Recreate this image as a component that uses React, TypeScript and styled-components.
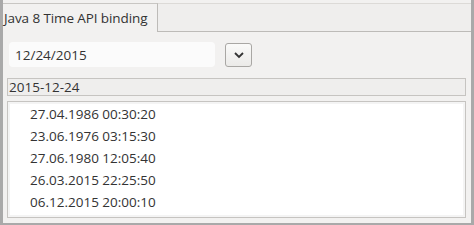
import React from "react";
import styled, { createGlobalStyle } from "styled-components";

const Global = createGlobalStyle`
  html, body {
    margin: 0;
    padding: 0;
    background: #f2f1f0;
  }
  body {
    font-family: "Open Sans", "DejaVu Sans", sans-serif;
    font-size: 13.5px;
    color: #333;
  }
`;

const Window = styled.div`
  width: 474px;
  height: 225px;
  box-sizing: border-box;
  display: flex;
  flex-direction: column;
  background: #f2f1f0;
  border-left: 3px solid #a9a9a9;
  border-right: 3px solid #a9a9a9;
  border-bottom: 2px solid #a9a9a9;
`;

const TabBar = styled.div`
  display: flex;
  height: 32px;
  flex-shrink: 0;
`;

const Tab = styled.div`
  width: 155px;
  box-sizing: border-box;
  padding: 5px 0 0 1px;
  border-top: 1px solid #c8c6c3;
  border-right: 1px solid #bdbbb8;
  margin-top: 3px;
  background: #f2f1f0;
  white-space: nowrap;
  letter-spacing: -0.1px;
`;

const TabFiller = styled.div`
  flex: 1;
  margin-top: 3px;
  box-sizing: border-box;
  background: #efeeed;
  border-top: 1px solid #dcdad7;
  border-bottom: 1px solid #bdbbb8;
`;

const Panel = styled.div`
  flex: 1;
  display: flex;
  flex-direction: column;
  padding: 10px 5px 5px 4px;
`;

const PickerRow = styled.div`
  display: flex;
  align-items: center;
  gap: 10px;
  padding-left: 2px;
`;

const DateField = styled.div`
  width: 206px;
  height: 25px;
  box-sizing: border-box;
  border-radius: 4px;
  background: #fbfbfb;
  padding-left: 6px;
  display: flex;
  align-items: center;
`;

const DropButton = styled.button`
  width: 27px;
  height: 24px;
  box-sizing: border-box;
  border: 1px solid #a9a7a4;
  border-radius: 3px;
  background: linear-gradient(#fafaf9, #ebeae8);
  display: flex;
  align-items: center;
  justify-content: center;
  padding: 0;
`;

const ValueLabel = styled.div`
  margin-top: 11px;
  height: 18px;
  box-sizing: border-box;
  border: 1px solid #c6c4c1;
  background: #efeeed;
  padding-left: 1px;
  display: flex;
  align-items: center;
`;

const List = styled.ul`
  list-style: none;
  margin: 5px 0 0;
  padding: 1px 0 0 0;
  flex: 1;
  background: #fff;
  border: 1px solid #c6c4c1;
  box-shadow: inset 0 0 0 2px #f4f4f4;
`;

const Item = styled.li`
  height: 22px;
  display: flex;
  align-items: center;
  padding-left: 22px;
`;

const dates = [
  "27.04.1986 00:30:20",
  "23.06.1976 03:15:30",
  "27.06.1980 12:05:40",
  "26.03.2015 22:25:50",
  "06.12.2015 20:00:10",
];

export default function App() {
  return (
    <>
      <Global />
      <Window>
        <TabBar>
          <Tab>Java 8 Time API binding</Tab>
          <TabFiller />
        </TabBar>
        <Panel>
          <PickerRow>
            <DateField>12/24/2015</DateField>
            <DropButton>
              <svg width="12" height="8" viewBox="0 0 12 8">
                <path d="M2 2 L6 6 L10 2" fill="none" stroke="#333" strokeWidth="1.8" />
              </svg>
            </DropButton>
          </PickerRow>
          <ValueLabel>2015-12-24</ValueLabel>
          <List>
            {dates.map((d) => (
              <Item key={d}>{d}</Item>
            ))}
          </List>
        </Panel>
      </Window>
    </>
  );
}
